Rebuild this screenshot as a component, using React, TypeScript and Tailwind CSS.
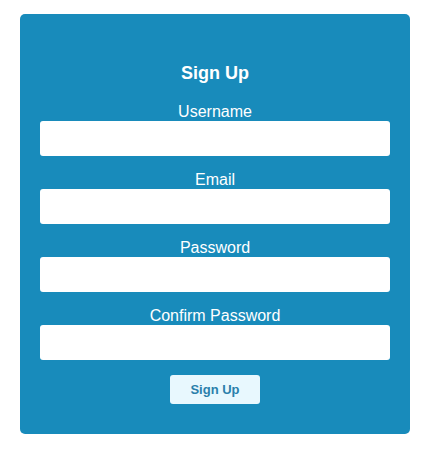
export default function App() {
  const fields = ["Username", "Email", "Password", "Confirm Password"];
  return (
    <div className="min-h-[450px] bg-white pt-[14px] pl-5 font-['Liberation_Sans',Arial,sans-serif]">
      <form
        className="w-[390px] h-[420px] rounded-[5px] bg-[#188bbb] px-5 pt-[49px] flex flex-col items-center text-white"
        onSubmit={(e) => e.preventDefault()}
      >
        <h2 className="text-[18px] leading-[21px] font-bold">Sign Up</h2>
        <div className="mt-[19px] w-full flex flex-col gap-[15px]">
          {fields.map((f) => (
            <div key={f} className="flex flex-col items-center">
              <label className="text-[16px] leading-[18px]">{f}</label>
              <input
                type={f.includes("Password") ? "password" : f === "Email" ? "email" : "text"}
                className="w-full h-[35px] rounded-[3px] bg-white text-black px-2 outline-none"
              />
            </div>
          ))}
        </div>
        <button
          type="submit"
          className="mt-[15px] w-[90px] h-[29px] rounded-[3px] bg-[#e8f8fe] text-[#2a7fab] text-[13px] font-bold"
        >
          Sign Up
        </button>
      </form>
    </div>
  );
}
